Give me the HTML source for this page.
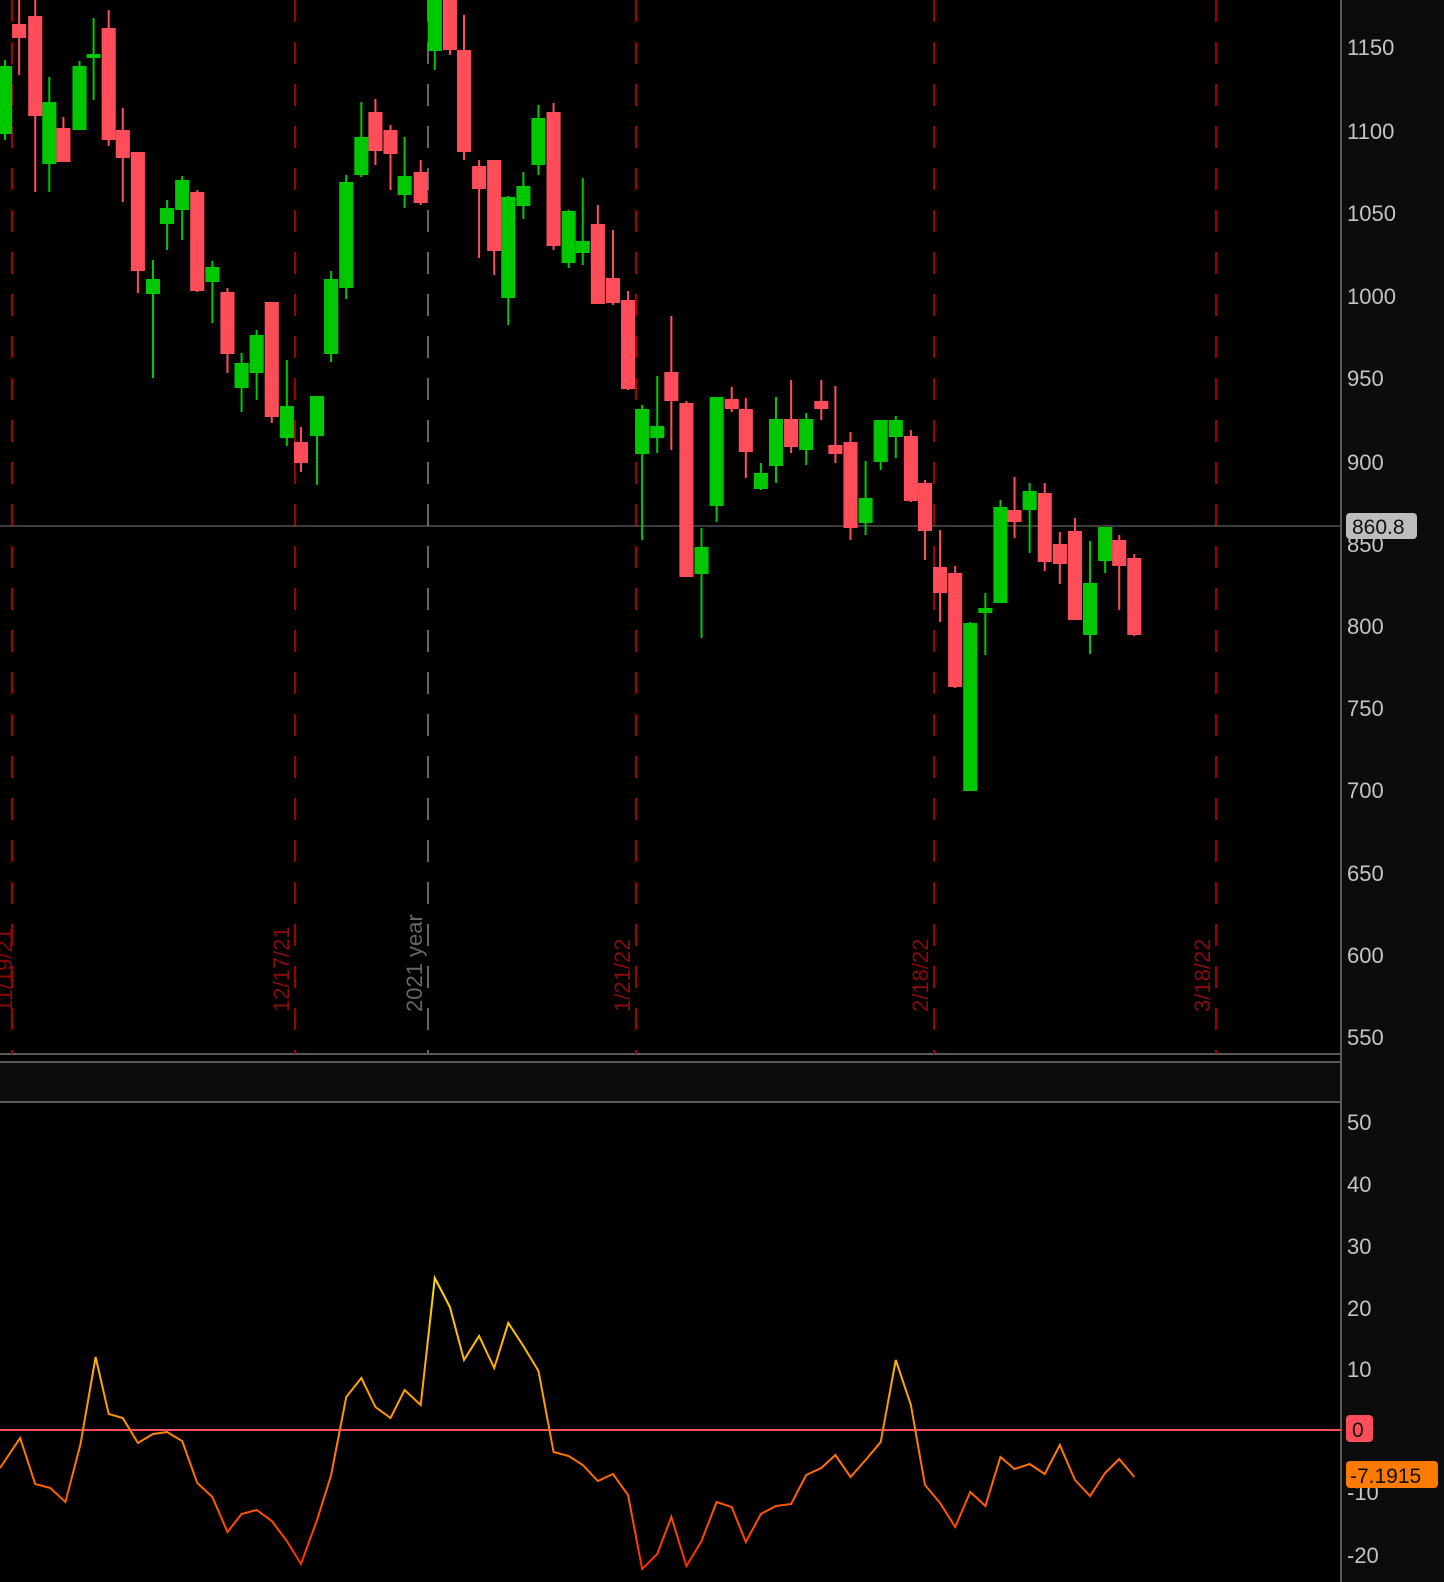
<!DOCTYPE html>
<html><head><meta charset="utf-8"><style>
html,body{margin:0;padding:0;background:#000;}
svg{display:block;}
text{font-family:"Liberation Sans","DejaVu Sans",sans-serif;}
</style></head><body>
<svg width="1444" height="1582" viewBox="0 0 1444 1582" xmlns="http://www.w3.org/2000/svg">
<defs>
<linearGradient id="og" gradientUnits="userSpaceOnUse" x1="0" y1="1270" x2="0" y2="1570">
<stop offset="0" stop-color="#ffe000"/><stop offset="0.45" stop-color="#ff9a00"/><stop offset="1" stop-color="#ff2a00"/>
</linearGradient>
</defs>
<rect width="1444" height="1582" fill="#000"/>
<rect x="1341" y="0" width="103" height="1582" fill="#0c0c0c"/>
<rect x="0" y="1062" width="1341" height="40" fill="#0c0c0c"/>
<g stroke="#5a5a5a" stroke-width="2" fill="none">
<line x1="1341" y1="0" x2="1341" y2="1582"/>
<line x1="0" y1="1054" x2="1341" y2="1054"/>
<line x1="0" y1="1062" x2="1341" y2="1062"/>
<line x1="0" y1="1102" x2="1341" y2="1102"/>
</g>
<g stroke="#a00000" stroke-width="2" stroke-dasharray="22,20">
<line x1="12" y1="0" x2="12" y2="1054"/>
<line x1="295" y1="0" x2="295" y2="1054"/>
<line x1="636" y1="0" x2="636" y2="1054"/>
<line x1="934" y1="0" x2="934" y2="1054"/>
<line x1="1216" y1="0" x2="1216" y2="1054"/>
</g>
<line x1="428" y1="0" x2="428" y2="1054" stroke="#666" stroke-width="2" stroke-dasharray="22,20"/>
<line x1="0" y1="526" x2="1341" y2="526" stroke="#777" stroke-width="1"/>
<g font-size="22" fill="#8a0a0a">
<text transform="translate(12,1012) rotate(-90)">11/19/21</text>
<text transform="translate(289,1012) rotate(-90)">12/17/21</text>
<text transform="translate(630,1012) rotate(-90)">1/21/22</text>
<text transform="translate(928,1012) rotate(-90)">2/18/22</text>
<text transform="translate(1210,1012) rotate(-90)">3/18/22</text>
<text transform="translate(422,1012) rotate(-90)" fill="#666">2021 year</text>
</g>
<g stroke-width="2" transform="scale(1.0065,1)">
<g stroke="#00c800" fill="#00c800">
<line x1="5" y1="60" x2="5" y2="140"/><rect x="-1" y="67" width="12" height="66"/>
<line x1="49" y1="77" x2="49" y2="192"/><rect x="43" y="103" width="12" height="60"/>
<line x1="79" y1="61" x2="79" y2="130"/><rect x="73" y="67" width="12" height="62"/>
<line x1="93" y1="18" x2="93" y2="100"/><rect x="87" y="55" width="12" height="2"/>
<line x1="152" y1="260" x2="152" y2="378"/><rect x="146" y="280" width="12" height="13"/>
<line x1="166" y1="200" x2="166" y2="250"/><rect x="160" y="209" width="12" height="14"/>
<line x1="181" y1="176" x2="181" y2="240"/><rect x="175" y="181" width="12" height="28"/>
<line x1="211" y1="261" x2="211" y2="323"/><rect x="205" y="268" width="12" height="13"/>
<line x1="240" y1="353" x2="240" y2="412"/><rect x="234" y="364" width="12" height="23"/>
<line x1="255" y1="330" x2="255" y2="400"/><rect x="249" y="336" width="12" height="36"/>
<line x1="285" y1="360" x2="285" y2="446"/><rect x="279" y="407" width="12" height="30"/>
<line x1="315" y1="397" x2="315" y2="485"/><rect x="309" y="397" width="12" height="38"/>
<line x1="329" y1="271" x2="329" y2="362"/><rect x="323" y="280" width="12" height="73"/>
<line x1="344" y1="175" x2="344" y2="299"/><rect x="338" y="183" width="12" height="104"/>
<line x1="359" y1="102" x2="359" y2="177"/><rect x="353" y="138" width="12" height="36"/>
<line x1="402" y1="137" x2="402" y2="208"/><rect x="396" y="177" width="12" height="17"/>
<line x1="432" y1="0" x2="432" y2="70"/><rect x="426" y="0" width="12" height="50"/>
<line x1="505" y1="196" x2="505" y2="325"/><rect x="499" y="198" width="12" height="99"/>
<line x1="520" y1="172" x2="520" y2="219"/><rect x="514" y="187" width="12" height="18"/>
<line x1="535" y1="105" x2="535" y2="175"/><rect x="529" y="119" width="12" height="45"/>
<line x1="565" y1="210" x2="565" y2="268"/><rect x="559" y="212" width="12" height="50"/>
<line x1="579" y1="178" x2="579" y2="265"/><rect x="573" y="242" width="12" height="10"/>
<line x1="638" y1="405" x2="638" y2="540"/><rect x="632" y="410" width="12" height="43"/>
<line x1="653" y1="376" x2="653" y2="453"/><rect x="647" y="427" width="12" height="10"/>
<line x1="697" y1="528" x2="697" y2="638"/><rect x="691" y="548" width="12" height="25"/>
<line x1="712" y1="397" x2="712" y2="522"/><rect x="706" y="398" width="12" height="107"/>
<line x1="756" y1="463" x2="756" y2="490"/><rect x="750" y="474" width="12" height="14"/>
<line x1="771" y1="397" x2="771" y2="483"/><rect x="765" y="420" width="12" height="45"/>
<line x1="801" y1="413" x2="801" y2="465"/><rect x="795" y="420" width="12" height="29"/>
<line x1="860" y1="461" x2="860" y2="535"/><rect x="854" y="499" width="12" height="23"/>
<line x1="875" y1="420" x2="875" y2="470"/><rect x="869" y="421" width="12" height="40"/>
<line x1="890" y1="416" x2="890" y2="458"/><rect x="884" y="421" width="12" height="15"/>
<line x1="964" y1="622" x2="964" y2="790"/><rect x="958" y="624" width="12" height="166"/>
<line x1="979" y1="593" x2="979" y2="655"/><rect x="973" y="609" width="12" height="3"/>
<line x1="994" y1="500" x2="994" y2="602"/><rect x="988" y="508" width="12" height="94"/>
<line x1="1023" y1="483" x2="1023" y2="553"/><rect x="1017" y="492" width="12" height="17"/>
<line x1="1083" y1="541" x2="1083" y2="654"/><rect x="1077" y="584" width="12" height="50"/>
<line x1="1098" y1="527" x2="1098" y2="573"/><rect x="1092" y="528" width="12" height="32"/>
</g>
<g stroke="#ff4d5a" fill="#ff4d5a">
<line x1="19" y1="0" x2="19" y2="75"/><rect x="13" y="25" width="12" height="12"/>
<line x1="35" y1="0" x2="35" y2="192"/><rect x="29" y="17" width="12" height="98"/>
<line x1="63" y1="117" x2="63" y2="162"/><rect x="57" y="129" width="12" height="32"/>
<line x1="108" y1="10" x2="108" y2="146"/><rect x="102" y="29" width="12" height="110"/>
<line x1="122" y1="108" x2="122" y2="202"/><rect x="116" y="131" width="12" height="26"/>
<line x1="137" y1="153" x2="137" y2="293"/><rect x="131" y="153" width="12" height="117"/>
<line x1="196" y1="190" x2="196" y2="292"/><rect x="190" y="193" width="12" height="97"/>
<line x1="226" y1="288" x2="226" y2="373"/><rect x="220" y="293" width="12" height="60"/>
<line x1="270" y1="303" x2="270" y2="423"/><rect x="264" y="303" width="12" height="113"/>
<line x1="299" y1="427" x2="299" y2="472"/><rect x="293" y="443" width="12" height="19"/>
<line x1="373" y1="99" x2="373" y2="165"/><rect x="367" y="113" width="12" height="37"/>
<line x1="388" y1="125" x2="388" y2="190"/><rect x="382" y="131" width="12" height="22"/>
<line x1="418" y1="160" x2="418" y2="205"/><rect x="412" y="173" width="12" height="29"/>
<line x1="447" y1="0" x2="447" y2="55"/><rect x="441" y="0" width="12" height="49"/>
<line x1="461" y1="15" x2="461" y2="160"/><rect x="455" y="51" width="12" height="100"/>
<line x1="476" y1="160" x2="476" y2="258"/><rect x="470" y="167" width="12" height="21"/>
<line x1="491" y1="161" x2="491" y2="275"/><rect x="485" y="161" width="12" height="89"/>
<line x1="550" y1="103" x2="550" y2="250"/><rect x="544" y="113" width="12" height="132"/>
<line x1="594" y1="205" x2="594" y2="303"/><rect x="588" y="225" width="12" height="78"/>
<line x1="609" y1="230" x2="609" y2="305"/><rect x="603" y="279" width="12" height="23"/>
<line x1="624" y1="291" x2="624" y2="390"/><rect x="618" y="301" width="12" height="87"/>
<line x1="667" y1="316" x2="667" y2="450"/><rect x="661" y="373" width="12" height="27"/>
<line x1="682" y1="401" x2="682" y2="576"/><rect x="676" y="404" width="12" height="172"/>
<line x1="727" y1="387" x2="727" y2="412"/><rect x="721" y="400" width="12" height="8"/>
<line x1="741" y1="398" x2="741" y2="478"/><rect x="735" y="410" width="12" height="41"/>
<line x1="786" y1="380" x2="786" y2="453"/><rect x="780" y="420" width="12" height="26"/>
<line x1="816" y1="380" x2="816" y2="420"/><rect x="810" y="402" width="12" height="6"/>
<line x1="830" y1="386" x2="830" y2="463"/><rect x="824" y="446" width="12" height="7"/>
<line x1="845" y1="432" x2="845" y2="540"/><rect x="839" y="443" width="12" height="84"/>
<line x1="905" y1="430" x2="905" y2="502"/><rect x="899" y="437" width="12" height="63"/>
<line x1="919" y1="480" x2="919" y2="560"/><rect x="913" y="484" width="12" height="46"/>
<line x1="934" y1="530" x2="934" y2="622"/><rect x="928" y="568" width="12" height="24"/>
<line x1="949" y1="566" x2="949" y2="688"/><rect x="943" y="574" width="12" height="112"/>
<line x1="1008" y1="477" x2="1008" y2="538"/><rect x="1002" y="511" width="12" height="10"/>
<line x1="1038" y1="483" x2="1038" y2="571"/><rect x="1032" y="494" width="12" height="67"/>
<line x1="1053" y1="532" x2="1053" y2="584"/><rect x="1047" y="545" width="12" height="18"/>
<line x1="1068" y1="518" x2="1068" y2="617"/><rect x="1062" y="532" width="12" height="87"/>
<line x1="1112" y1="535" x2="1112" y2="610"/><rect x="1106" y="541" width="12" height="24"/>
<line x1="1127" y1="554" x2="1127" y2="636"/><rect x="1121" y="559" width="12" height="75"/>
</g>
</g>
<line x1="0" y1="1430" x2="1341" y2="1430" stroke="#ff4d5a" stroke-width="2"/>
<polyline transform="scale(1.0065,1)" fill="none" stroke="url(#og)" stroke-width="2" points="0,1468 20,1438 35,1484 50,1488 65,1502 80,1444 95,1357 108,1414 122,1418 137,1443 152,1434 166,1432 181,1441 196,1483 211,1497 226,1532 240,1514 255,1510 270,1521 285,1541 299,1564 315,1520 329,1475 344,1397 359,1378 373,1407 388,1418 402,1390 418,1405 432,1278 447,1307 461,1360 476,1336 491,1368 505,1323 520,1346 535,1371 550,1452 565,1456 579,1465 594,1481 609,1474 624,1495 638,1569 653,1554 667,1517 682,1566 697,1541 712,1502 727,1507 741,1542 756,1514 771,1506 786,1504 801,1475 816,1468 830,1455 845,1477 860,1460 875,1442 890,1360 905,1405 919,1485 934,1503 949,1527 964,1492 979,1506 994,1457 1008,1469 1023,1464 1038,1474 1053,1445 1068,1480 1083,1496 1098,1473 1112,1459 1127,1477"/>
<g font-size="22" fill="#c4c4c4">
<text x="1347" y="55">1150</text>
<text x="1347" y="139">1100</text>
<text x="1347" y="221">1050</text>
<text x="1347" y="304">1000</text>
<text x="1347" y="386">950</text>
<text x="1347" y="470">900</text>
<text x="1347" y="552">850</text>
<text x="1347" y="634">800</text>
<text x="1347" y="716">750</text>
<text x="1347" y="798">700</text>
<text x="1347" y="881">650</text>
<text x="1347" y="963">600</text>
<text x="1347" y="1045">550</text>
<text x="1347" y="1130">50</text>
<text x="1347" y="1192">40</text>
<text x="1347" y="1254">30</text>
<text x="1347" y="1316">20</text>
<text x="1347" y="1377">10</text>
<text x="1347" y="1500">-10</text>
<text x="1347" y="1563">-20</text>
</g>
<rect x="1346" y="513" width="71" height="26" rx="4" fill="#bdbdbd"/>
<text x="1352" y="534" font-size="21" fill="#111">860.8</text>
<rect x="1346" y="1415" width="27" height="27" rx="4" fill="#ff4d5a"/>
<text x="1352" y="1437" font-size="21" fill="#111">0</text>
<rect x="1346" y="1461" width="92" height="27" rx="4" fill="#ff7a00"/>
<text x="1350" y="1483" font-size="21" fill="#111">-7.1915</text>
</svg>
</body></html>
